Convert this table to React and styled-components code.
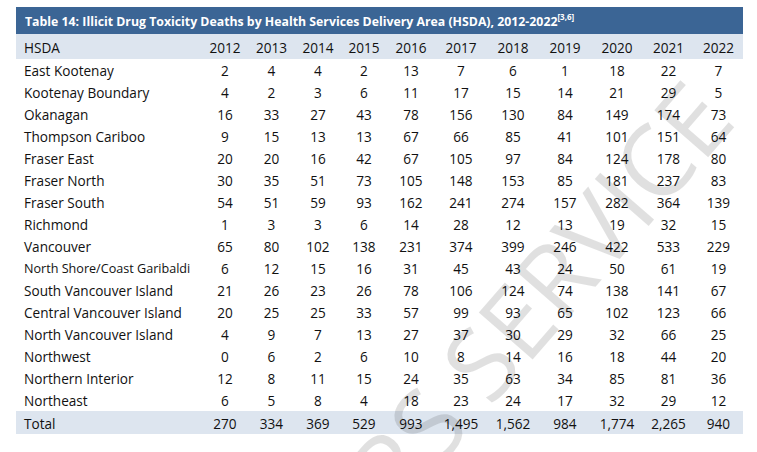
import styled, { createGlobalStyle } from "styled-components";

const GlobalStyle = createGlobalStyle`
  html, body {
    margin: 0;
    padding: 0;
    background: #ffffff;
  }
  body {
    font-family: "Open Sans", "Noto Sans", "DejaVu Sans", sans-serif;
    color: #111;
  }
`;

const Page = styled.div`
  width: 757px;
  height: 452px;
  padding: 7px 0 0 16px;
  box-sizing: border-box;
  overflow: hidden;
`;

const Frame = styled.div`
  position: relative;
  width: 727px;
`;

const Title = styled.div`
  background: #3b6595;
  color: #ffffff;
  font-weight: 700;
  font-size: 12.3px;
  height: 27px;
  line-height: 29px;
  padding-left: 9px;
  white-space: nowrap;

  sup {
    font-size: 8px;
    font-weight: 700;
    vertical-align: 6px;
    line-height: 0;
  }
`;

const Table = styled.table`
  width: 727px;
  border-collapse: collapse;
  table-layout: fixed;
  font-size: 13.6px;
`;

const HeadRow = styled.tr`
  background: #dde5ef;
  height: 25px;
`;

const Row = styled.tr`
  background: ${(p) => (p.$total ? "#dde5ef" : "transparent")};
  height: ${(p) => (p.$total ? "23px" : "22px")};
`;

const NameCell = styled.td`
  padding: 2px 0 0 8px;
  text-align: left;
  white-space: nowrap;
  font-size: ${(p) => (p.$small ? "12.6px" : "inherit")};
  font-weight: 400;
  line-height: 20px;
`;

const NumCell = styled.td`
  padding: 2px 0 0 0;
  text-align: center;
  white-space: nowrap;
  font-weight: 400;
  line-height: 20px;
`;

const Watermark = styled.div`
  position: absolute;
  right: 34px;
  top: 40px;
  transform: rotate(-49deg);
  transform-origin: right center;
  font-size: 100px;
  line-height: 100px;
  height: 100px;
  font-weight: 400;
  color: rgba(0, 0, 0, 0.12);
  white-space: nowrap;
  pointer-events: none;
`;

const widths = [186, 46, 47, 46, 46, 48, 52, 52, 52, 52, 51, 49];
const years = [2012, 2013, 2014, 2015, 2016, 2017, 2018, 2019, 2020, 2021, 2022];

const rows = [
  ["East Kootenay", 2, 4, 4, 2, 13, 7, 6, 1, 18, 22, 7],
  ["Kootenay Boundary", 4, 2, 3, 6, 11, 17, 15, 14, 21, 29, 5],
  ["Okanagan", 16, 33, 27, 43, 78, 156, 130, 84, 149, 174, 73],
  ["Thompson Cariboo", 9, 15, 13, 13, 67, 66, 85, 41, 101, 151, 64],
  ["Fraser East", 20, 20, 16, 42, 67, 105, 97, 84, 124, 178, 80],
  ["Fraser North", 30, 35, 51, 73, 105, 148, 153, 85, 181, 237, 83],
  ["Fraser South", 54, 51, 59, 93, 162, 241, 274, 157, 282, 364, 139],
  ["Richmond", 1, 3, 3, 6, 14, 28, 12, 13, 19, 32, 15],
  ["Vancouver", 65, 80, 102, 138, 231, 374, 399, 246, 422, 533, 229],
  ["North Shore/Coast Garibaldi", 6, 12, 15, 16, 31, 45, 43, 24, 50, 61, 19],
  ["South Vancouver Island", 21, 26, 23, 26, 78, 106, 124, 74, 138, 141, 67],
  ["Central Vancouver Island", 20, 25, 25, 33, 57, 99, 93, 65, 102, 123, 66],
  ["North Vancouver Island", 4, 9, 7, 13, 27, 37, 30, 29, 32, 66, 25],
  ["Northwest", 0, 6, 2, 6, 10, 8, 14, 16, 18, 44, 20],
  ["Northern Interior", 12, 8, 11, 15, 24, 35, 63, 34, 85, 81, 36],
  ["Northeast", 6, 5, 8, 4, 18, 23, 24, 17, 32, 29, 12],
];

const totals = ["270", "334", "369", "529", "993", "1,495", "1,562", "984", "1,774", "2,265", "940"];

export default function App() {
  return (
    <>
      <GlobalStyle />
      <Page>
        <Frame>
          <Title>
            Table 14: Illicit Drug Toxicity Deaths by Health Services Delivery Area (HSDA), 2012-2022
            <sup>[3,6]</sup>
          </Title>
          <Table>
            <colgroup>
              {widths.map((w, i) => (
                <col key={i} style={{ width: w }} />
              ))}
            </colgroup>
            <thead>
              <HeadRow>
                <NameCell as="th">HSDA</NameCell>
                {years.map((y) => (
                  <NumCell as="th" key={y}>
                    {y}
                  </NumCell>
                ))}
              </HeadRow>
            </thead>
            <tbody>
              {rows.map(([name, ...vals]) => (
                <Row key={name}>
                  <NameCell $small={name.length > 24}>{name}</NameCell>
                  {vals.map((v, i) => (
                    <NumCell key={i}>{v}</NumCell>
                  ))}
                </Row>
              ))}
              <Row $total>
                <NameCell>Total</NameCell>
                {totals.map((v, i) => (
                  <NumCell key={i}>{v}</NumCell>
                ))}
              </Row>
            </tbody>
          </Table>
          <Watermark>CORONERS SERVICE</Watermark>
        </Frame>
      </Page>
    </>
  );
}
